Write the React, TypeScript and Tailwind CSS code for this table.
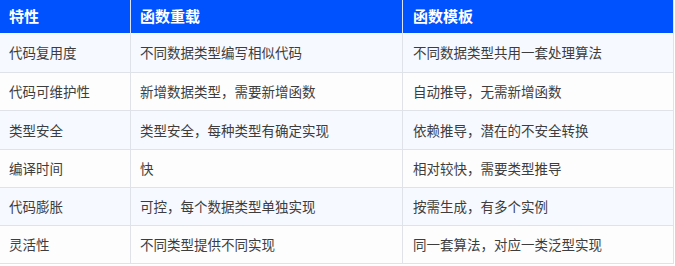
import React from "react";

const rows = [
  ["代码复用度", "不同数据类型编写相似代码", "不同数据类型共用一套处理算法"],
  ["代码可维护性", "新增数据类型，需要新增函数", "自动推导，无需新增函数"],
  ["类型安全", "类型安全，每种类型有确定实现", "依赖推导，潜在的不安全转换"],
  ["编译时间", "快", "相对较快，需要类型推导"],
  ["代码膨胀", "可控，每个数据类型单独实现", "按需生成，有多个实例"],
  ["灵活性", "不同类型提供不同实现", "同一套算法，对应一类泛型实现"],
];

// row heights include the bottom border
const heights = ["h-[40px]", "h-[38px]", "h-[39px]", "h-[38px]", "h-[38px]", "h-[38px]"];

const cols = "grid grid-cols-[131px_272px_1fr]";

const App = () => {
  return (
    <div
      className="w-[675px] h-[266px] bg-white"
      style={{ fontFamily: '"Noto Sans CJK SC", "Noto Sans", sans-serif' }}
    >
      <div className="w-[674px] border-r border-[#dfe2e8]">
        <div className={`${cols} h-[33px] bg-[#0052ff] text-white font-bold text-[15px]`}>
          <div className="flex items-center pl-[9px] border-r border-[#dbe4ff]">特性</div>
          <div className="flex items-center pl-[9px] border-r border-[#dbe4ff]">函数重载</div>
          <div className="flex items-center pl-[10px]">函数模板</div>
        </div>
        {rows.map((r, i) => (
          <div
            key={i}
            className={`${cols} ${heights[i]} border-b border-[#dfe2e8] text-[13.5px] text-[#3d3d3d] ${
              i % 2 === 0 ? "bg-[#f6f9ff]" : "bg-[#fdfdfd]"
            }`}
          >
            <div className="flex items-center pl-[9px] border-r border-[#dfe2e8]">{r[0]}</div>
            <div className="flex items-center pl-[9px] border-r border-[#dfe2e8]">{r[1]}</div>
            <div className="flex items-center pl-[10px]">{r[2]}</div>
          </div>
        ))}
      </div>
    </div>
  );
};

export default App;
